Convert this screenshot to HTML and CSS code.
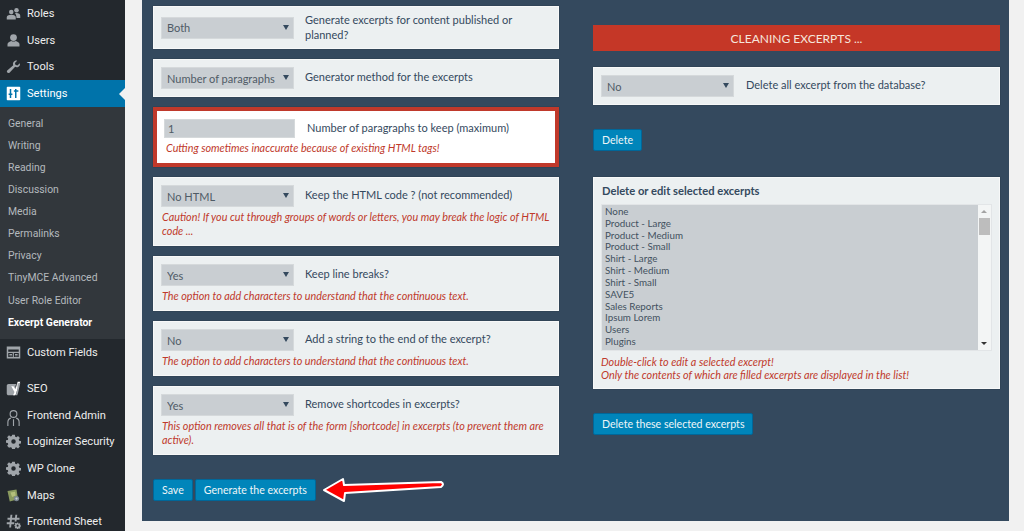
FILE: index.html

```html
<!DOCTYPE html>
<html lang="en">
<head>
    <meta charset="UTF-8">
    <meta name="viewport" content="width=device-width, initial-scale=1.0">
    <title>Excerpt Generator</title>
    <link rel="stylesheet" href="styles.css">
</head>
<body>

<svg class="defs" width="0" height="0">
    <symbol id="gear" viewBox="0 0 20 20">
        <path d="M8.2 1h3.6l.5 2.6 1.5.6 2.2-1.5 2.5 2.5-1.5 2.2.6 1.5 2.4.5v3.2l-2.4.5-.6 1.5 1.5 2.2-2.5 2.5-2.2-1.5-1.5.6-.5 2.5H8.2l-.5-2.5-1.5-.6L4 18.300l-2.500-2.500 1.500-2.200-.6-1.500L0 11.600V8.400l2.400-.5.6-1.500L1.500 4.200 4 1.700l2.200 1.500 1.500-.6zM10 7a3 3 0 1 0 0 6 3 3 0 0 0 0-6z"/>
    </symbol>
</svg>

<!-- Admin menu -->
<div class="sidebar">
    <div class="menu-item">
        <svg class="menu-icon" viewBox="0 0 20 20"><circle cx="7" cy="8" r="3"/><circle cx="14" cy="5.500" r="3"/><path d="M1 18v-3c0-2 2-3.500 6-3.500s6 1.500 6 3.500v3zM12 9.500c4-.5 7 .5 7 3.500v3h-5c0-3-.5-4.500-2-6.500z"/></svg>
        Roles
    </div>
    <div class="menu-item">
        <svg class="menu-icon" viewBox="0 0 20 20"><circle cx="10" cy="6" r="4.500"/><path d="M2 18v-3c0-2.500 3-4 5-4.500 1.500 1 4.500 1 6 0 2 .5 5 2 5 4.500v3z"/></svg>
        Users
    </div>
    <div class="menu-item">
        <svg class="menu-icon" viewBox="0 0 20 20"><path d="M18.500 5.500c.5 2-.3 4-2.300 5-1.500.7-3 .5-4-.2L5 18c-1 1-2.500 1-3.300.1-.8-.9-.7-2.200.3-3.100l7.700-6.600c-.6-1.200-.6-2.800.2-4 1-1.700 3-2.500 5-2.200l-3 3 .6 2.600 2.600.7z"/></svg>
        Tools
    </div>
    <div class="menu-item current">
        <svg class="menu-icon" viewBox="0 0 20 20"><path fill-rule="evenodd" d="M2 1h16a1 1 0 0 1 1 1v16a1 1 0 0 1-1 1H2a1 1 0 0 1-1-1V2a1 1 0 0 1 1-1zM5 4v6H3.500v2H5v4h2v-4h1.500v-2H7V4zm7 0v1.500h-1.500v2H12V16h2V7.500h2.500v-2H14V4z"/></svg>
        Settings
    </div>
    <div class="submenu">
        <a>General</a>
        <a>Writing</a>
        <a>Reading</a>
        <a>Discussion</a>
        <a>Media</a>
        <a>Permalinks</a>
        <a>Privacy</a>
        <a>TinyMCE Advanced</a>
        <a>User Role Editor</a>
        <a class="active">Excerpt Generator</a>
    </div>
    <div class="menu-item">
        <svg class="menu-icon" viewBox="0 0 20 20"><path fill-rule="evenodd" d="M1 2h18v16H1zM3 6v3h14V6zm0 4.500V16h6v-5.500zm7.500 0V16H17v-5.500zM4.500 12H8v1.200H4.500zm0 2H8v1H4.500zM12 12h3.500v1.200H12zm0 2h3.500v1h-3.500z"/></svg>
        Custom Fields
    </div>
    <div class="menu-item sep">
        <svg class="menu-icon" viewBox="0 0 20 20"><path d="M3.500 4H14l-1.500 2.500 1.500 9.500-2 3H3.500C2 19 1 18 1 16.500v-10C1 5 2 4 3.500 4z"/><path d="M19 1l-6.500 18H9.500l1.800-4.500L7 7h3l2.500 4 2.500-8 .5-2z" fill="#fff"/><path d="M15.500 3L19 3l-3 13-1 3h-2l2-8z"/></svg>
        SEO
    </div>
    <div class="menu-item">
        <svg class="menu-icon tall" viewBox="0 0 20 24"><circle cx="10" cy="6" r="4.500" fill="none" stroke="#a0a5aa" stroke-width="1.500"/><path d="M2.500 22v-5c0-3 1.500-5 4-5.500M17.500 22v-5c0-3-1.500-5-4-5.500M10 13v9" fill="none" stroke="#a0a5aa" stroke-width="1.500"/></svg>
        Frontend Admin
    </div>
    <div class="menu-item">
        <svg class="menu-icon" viewBox="0 0 20 20"><use href="#gear"/></svg>
        Loginizer Security
    </div>
    <div class="menu-item">
        <svg class="menu-icon" viewBox="0 0 20 20"><use href="#gear"/></svg>
        WP Clone
    </div>
    <div class="menu-item">
        <svg class="menu-icon" viewBox="0 0 20 20"><path d="M2 4l12-2 2 13-11 3z" fill="#8a9a5f"/><path d="M6 6l6-1 1 5-5 2z" fill="#b4bf7c"/><circle cx="14" cy="14" r="3.500" fill="#7b8794"/><circle cx="14" cy="14" r="1.500" fill="#c9ced2"/></svg>
        Maps
    </div>
    <div class="menu-item">
        <svg class="menu-icon" viewBox="0 0 20 20"><path fill-rule="evenodd" d="M6 1h2.500L8 5h4l.5-4H15l-.5 4H18v2.500h-3.800L14 10h-2.500l.2-2.500H7.800L7.500 11H11v2.500H7.200L6.800 18H4.300l.4-4.500H1V11h3.900l.3-3.500H2V5h3.500z"/><use href="#gear" x="11" y="11" width="9" height="9"/></svg>
        Frontend Sheet
    </div>
</div>

<div class="content">
    <div class="panel">

        <div class="column">
            <div class="card">
                <div class="row">
                    <div class="select-box"><select><option>Both</option></select></div>
                    <label>Generate excerpts for content published or planned?</label>
                </div>
            </div>

            <div class="card">
                <div class="row">
                    <div class="select-box"><select><option>Number of paragraphs</option></select></div>
                    <label>Generator method for the excerpts</label>
                </div>
            </div>

            <div class="card card-alert">
                <div class="row">
                    <input type="text" value="1">
                    <label>Number of paragraphs to keep (maximum)</label>
                </div>
                <p class="note">Cutting sometimes inaccurate because of existing HTML tags!</p>
            </div>

            <div class="card">
                <div class="row">
                    <div class="select-box"><select><option>No HTML</option></select></div>
                    <label>Keep the HTML code ? (not recommended)</label>
                </div>
                <p class="note">Caution! If you cut through groups of words or letters, you may break the logic of HTML code ...</p>
            </div>

            <div class="card">
                <div class="row">
                    <div class="select-box"><select><option>Yes</option></select></div>
                    <label>Keep line breaks?</label>
                </div>
                <p class="note">The option to add characters to understand that the continuous text.</p>
            </div>

            <div class="card">
                <div class="row">
                    <div class="select-box"><select><option>No</option></select></div>
                    <label>Add a string to the end of the excerpt?</label>
                </div>
                <p class="note">The option to add characters to understand that the continuous text.</p>
            </div>

            <div class="card">
                <div class="row">
                    <div class="select-box"><select><option>Yes</option></select></div>
                    <label>Remove shortcodes in excerpts?</label>
                </div>
                <p class="note">This option removes all that is of the form [shortcode] in excerpts (to prevent them are active).</p>
            </div>

            <div class="buttons">
                <button>Save</button>
                <button>Generate the excerpts</button>
            </div>
        </div>

        <div class="column column-right">
            <div class="banner">CLEANING EXCERPTS ...</div>

            <div class="card">
                <div class="row">
                    <div class="select-box"><select><option>No</option></select></div>
                    <label class="label-wide">Delete all excerpt from the database?</label>
                </div>
            </div>

            <div class="buttons buttons-delete">
                <button>Delete</button>
            </div>

            <div class="card card-list">
                <div class="list-title">Delete or edit selected excerpts</div>
                <div class="listbox">
                    <div class="list-items">
                        <div>None</div>
                        <div>Product - Large</div>
                        <div>Product - Medium</div>
                        <div>Product - Small</div>
                        <div>Shirt - Large</div>
                        <div>Shirt - Medium</div>
                        <div>Shirt - Small</div>
                        <div>SAVE5</div>
                        <div>Sales Reports</div>
                        <div>Ipsum Lorem</div>
                        <div>Users</div>
                        <div>Plugins</div>
                    </div>
                    <div class="scrollbar">
                        <span class="arrow-up"></span>
                        <span class="thumb"></span>
                        <span class="arrow-down"></span>
                    </div>
                </div>
                <p class="note">Double-click to edit a selected excerpt!<br>Only the contents of which are filled excerpts are displayed in the list!</p>
            </div>

            <div class="buttons buttons-selected">
                <button>Delete these selected excerpts</button>
            </div>
        </div>

        <!-- Arrow pointing at the generate button -->
        <svg class="callout" width="130" height="30" viewBox="0 0 130 30">
            <path d="M3 14 L22 3 L23 9 L120 6 Q124 8 120 11 L24 17 L23 25 Z" fill="#f00" stroke="#fff" stroke-width="2" stroke-linejoin="round"/>
        </svg>
    </div>
</div>

</body>
</html>
```

FILE: styles.css

```css
html, body {
    margin: 0;
    height: 531px;
    overflow: hidden;
}

body {
    display: flex;
    background-color: #f1f1f1;
    font-family: Lato, sans-serif;
}

.defs {
    position: absolute;
}

/* Admin menu */
.sidebar {
    width: 125px;
    flex-shrink: 0;
    height: 531px;
    overflow: hidden;
    background-color: #23282d;
    color: #eee;
    font-family: Roboto, sans-serif;
    font-size: 11.100px;
}

.menu-item {
    display: flex;
    align-items: center;
    gap: 6px;
    height: 26.700px;
    padding-left: 6px;
    position: relative;
}

.menu-item.sep {
    margin-top: 9.300px;
}

.menu-icon {
    width: 15px;
    height: 15px;
    flex-shrink: 0;
    fill: #a0a5aa;
}

.menu-icon.tall {
    height: 21px;
    margin-top: 7px;
}

.menu-item.current {
    background-color: #0073aa;
    color: #fff;
}

.menu-item.current .menu-icon {
    fill: #fff;
}

.menu-item.current::after {
    content: "";
    position: absolute;
    right: 0;
    top: 8px;
    border: 6px solid transparent;
    border-left-width: 0;
    border-right-color: #f1f1f1;
}

.submenu {
    background-color: #32373c;
    padding: 6px 0 5.500px;
}

.submenu a {
    display: block;
    height: 22.100px;
    line-height: 22px;
    padding-left: 8px;
    font-size: 10.400px;
    color: #b4b9be;
}

.submenu a.active {
    color: #fff;
    font-weight: bold;
}

/* Main panel */
.content {
    flex: 1;
    padding-left: 17px;
}

.panel {
    position: relative;
    width: 867px;
    height: 521px;
    box-sizing: border-box;
    padding: 6px 9px 0 11px;
    display: flex;
    justify-content: space-between;
    background-color: #34495e;
    font-size: 11px;
    color: #34495e;
}

.column {
    width: 406px;
}

.column-right {
    width: 407px;
    padding-top: 19px;
}

.banner {
    height: 26px;
    line-height: 27px;
    margin-bottom: 16px;
    text-align: center;
    font-size: 12px;
    color: #f6e5dc;
    background-color: #c53727;
}

.card {
    box-sizing: border-box;
    padding: 5px 7px;
    margin-bottom: 10px;
    background-color: #ecf0f1;
    border: 1px solid #f7f8f8;
    box-shadow: 0 0 1px rgba(0, 0, 0, 0.4);
}

.card-alert {
    padding: 8px 7px;
    background-color: #fff;
    border: 4px solid #c0392b;
}

.row {
    display: flex;
    align-items: center;
    min-height: 26px;
}

.card-alert .row {
    min-height: 19px;
}

label {
    flex: 1;
    margin-left: 11px;
    margin-top: -1px;
    padding-bottom: 2px;
    line-height: 15px;
}

.card:first-child label {
    margin-top: 0;
    padding-bottom: 1px;
}

.card-alert label {
    margin-left: 12px;
}

.label-wide {
    margin-left: 12px;
}

.select-box {
    position: relative;
    flex-shrink: 0;
    width: 133px;
    height: 22px;
}

.select-box::after {
    content: "";
    position: absolute;
    right: 5px;
    top: 8px;
    border: 3px solid transparent;
    border-bottom-width: 0;
    border-top: 5px solid #34495e;
}

select {
    appearance: none;
    width: 100%;
    height: 100%;
    padding: 0 0 0 5px;
    border: 1px solid #d5d9db;
    border-radius: 0;
    background-color: #c9ced2;
    font-family: Lato, sans-serif;
    font-size: 11px;
    color: #4f5b66;
}

input {
    width: 131px;
    height: 19px;
    box-sizing: border-box;
    padding: 0 0 0 3px;
    border: 1px solid #d5d9db;
    background-color: #c9ced2;
    font-family: Lato, sans-serif;
    font-size: 11px;
    color: #4f5b66;
}

.note {
    margin: 1px 1px 2px;
    font-size: 10.800px;
    line-height: 14px;
    font-style: italic;
    color: #c0392b;
}

.card-alert .note {
    margin: 3px 2px 0;
}

.buttons {
    display: flex;
    gap: 2px;
    margin-top: 24px;
}

.buttons-delete {
    margin-bottom: 26px;
}

button {
    height: 22px;
    padding: 0 8px;
    border: 1px solid #006799;
    border-radius: 2px;
    background-color: #0085ba;
    color: #eef5f8;
    font-family: Lato, sans-serif;
    font-size: 10.600px;
}

/* Excerpt list */
.card-list {
    padding: 3px 7px 7px;
}

.list-title {
    height: 23px;
    line-height: 15px;
    padding: 2px 0 0 1px;
    box-sizing: border-box;
    font-size: 11.200px;
    font-weight: bold;
}

.listbox {
    display: flex;
    height: 147px;
    box-sizing: border-box;
    border: 1px solid #e2e5e7;
    background-color: #c9ced2;
}

.list-items {
    flex: 1;
    padding: 1px 3px;
    font-size: 9.800px;
    line-height: 11.830px;
    color: #435160;
}

.scrollbar {
    position: relative;
    width: 13px;
    background-color: #f3f5f5;
}

.thumb {
    position: absolute;
    left: 1px;
    top: 13px;
    width: 11px;
    height: 17px;
    background-color: #bdbdbd;
}

.arrow-up {
    position: absolute;
    left: 3px;
    top: 5px;
    border: 3px solid transparent;
    border-top-width: 0;
    border-bottom: 3px solid #a3a3a3;
}

.arrow-down {
    position: absolute;
    left: 3px;
    bottom: 5px;
    border: 3px solid transparent;
    border-bottom-width: 0;
    border-top: 3px solid #333;
}

.card-list .note {
    margin: 4px 0 0;
    line-height: 13px;
}

/* Arrow */
.callout {
    position: absolute;
    left: 179px;
    top: 476px;
}
```
